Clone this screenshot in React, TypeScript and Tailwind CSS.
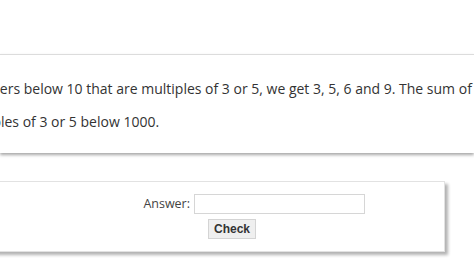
export default function App() {
  return (
    <div className="h-[266px] w-[474px] overflow-hidden bg-white font-['Open_Sans',sans-serif]">
      <div className="h-[54px]" />
      <div className="border-t border-[#dcdcdc] bg-white pt-[17px] pb-[15px] shadow-[0_2px_3px_rgba(0,0,0,0.35)]">
        <div className="ml-[-190px] whitespace-nowrap text-[14px] leading-[33px] text-[#333]">
          <p>If we list all the natural numbers below 10 that are multiples of 3 or 5, we get 3, 5, 6 and 9. The sum of these multiples is 23.</p>
          <p>Find the sum of all the multiples of 3 or 5 below 1000.</p>
        </div>
      </div>
      <div className="mt-[28px] mr-[29px] ml-[-20px] border border-[#e2e2e2] bg-white pt-[12px] pb-[12px] shadow-[3px_3px_3px_rgba(0,0,0,0.3)]">
        <div className="flex items-center">
          <div className="w-[213px] pr-[4px] text-right text-[12.5px] text-[#444]">Answer:</div>
          <input className="h-[20px] w-[171px] border border-[#d6d6d6] bg-white outline-none" />
        </div>
        <div className="mt-[5px] flex">
          <div className="w-[227px]" />
          <button className="h-[20px] border border-[#d4d4d4] bg-[#efefef] px-[5px] font-['Liberation_Sans',Arial,sans-serif] text-[12px] font-bold leading-none text-[#333]">
            Check
          </button>
        </div>
      </div>
    </div>
  );
}
